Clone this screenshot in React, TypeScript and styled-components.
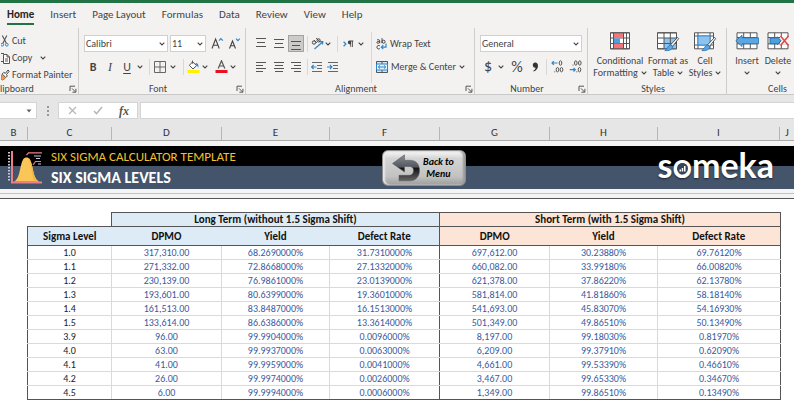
import React from "react";
import styled, { createGlobalStyle, css } from "styled-components";

const UI = `Carlito, "Open Sans", "Noto Sans", sans-serif`;
const SHEET = `Carlito, Lato, sans-serif`;
const COLS = "28fr 84fr 110fr 108fr 110fr 110fr 108fr 122fr 14fr";

const Global = createGlobalStyle`
  *, *::before, *::after { box-sizing: border-box; }
  body { margin: 0; background: #fff; font-family: ${UI}; color: #444; overflow-x: hidden; }
  button, input, select { font: inherit; color: inherit; margin: 0; }
`;

const bare = css`
  border: 0;
  padding: 0;
  background: none;
`;

const Page = styled.div`
  display: flex;
  flex-direction: column;
`;

const Top = styled.header`
  border-top: 3px solid #217346;
  background: #f3f2f1;
`;

const Tabs = styled.nav`
  display: flex;
  gap: 16px;
  padding-left: 7px;
  height: 25px;
`;

const Tab = styled.button<{ $active?: boolean }>`
  ${bare}
  height: 22px;
  padding-top: 2px;
  white-space: nowrap;
  font-size: 11px;
  font-weight: ${(p) => (p.$active ? 700 : 400)};
  color: ${(p) => (p.$active ? "#262626" : "#444")};
  border-bottom: 2px solid ${(p) => (p.$active ? "#217346" : "transparent")};
`;

const Ribbon = styled.div`
  display: grid;
  grid-template-columns: 79fr 167fr 229fr 113fr 139fr 67fr;
  height: 67px;
  border-bottom: 1px solid #c9c9c9;
`;

const Group = styled.section`
  display: flex;
  flex-direction: column;
  min-width: 0;
  margin-bottom: 3px;
  border-right: 1px solid #cfcdcb;
  &:last-child { border-right: 0; }
`;

const GroupBody = styled.div<{ $pad?: number }>`
  flex: 1;
  display: flex;
  flex-direction: column;
  padding: 4px 0 0 ${(p) => p.$pad ?? 0}px;
`;

const Caption = styled.div<{ $left?: boolean }>`
  position: relative;
  height: 12px;
  padding-right: 8px;
  line-height: 12px;
  font-size: 10px;
  text-align: ${(p) => (p.$left ? "left" : "center")};
`;

const CellsCaption = styled(Caption)`
  padding: 0 0 0 34px;
`;

const Launch = styled.button`
  ${bare}
  position: absolute;
  right: 1px;
  top: 2px;
  width: 8px;
  height: 8px;
  display: flex;
`;

const ClipItem = styled.button`
  ${bare}
  display: flex;
  align-items: center;
  gap: 2px;
  height: 17px;
  font-size: 10px;
  white-space: nowrap;
  svg { flex: none; }
`;

const Row = styled.div`
  display: flex;
  align-items: center;
  height: 23px;
`;

const Tool = styled.button<{ $w: number; $on?: boolean }>`
  ${bare}
  flex: none;
  display: flex;
  align-items: center;
  justify-content: center;
  width: ${(p) => p.$w}px;
  height: 17px;
  font-size: 12px;
  line-height: 16px;
  ${(p) => p.$on && "background: #cdcbca; border: 1px solid #a5a3a1;"}
`;

const Glyph = styled.span<{ $kind: "b" | "i" | "u" }>`
  font-size: 12px;
  font-weight: ${(p) => (p.$kind === "b" ? 700 : 400)};
  font-style: ${(p) => (p.$kind === "i" ? "italic" : "normal")};
  font-family: ${(p) => (p.$kind === "i" ? `"Liberation Serif", serif` : UI)};
  text-decoration: ${(p) => (p.$kind === "u" ? "underline" : "none")};
  text-underline-offset: 2px;
`;

const BigGlyph = styled.span`
  font-size: 16px;
`;

const Fx = styled.span`
  font-family: "Liberation Serif", serif;
  font-style: italic;
  font-weight: 700;
  font-size: 12px;
  color: #555;
`;

const Rule = styled.i<{ $w: number }>`
  flex: none;
  display: flex;
  justify-content: center;
  width: ${(p) => p.$w}px;
  height: 16px;
  &::before { content: ""; width: 1px; background: #dad8d6; }
`;

const Picker = styled.label<{ $w: number }>`
  display: flex;
  align-items: center;
  width: ${(p) => p.$w}px;
  height: 17px;
  margin-right: 2px;
  padding-right: 2px;
  background: #fff;
  border: 1px solid #d2d0ce;
  select {
    ${bare}
    appearance: none;
    flex: 1;
    min-width: 0;
    padding-left: 1px;
    font-size: 10px;
    outline: 0;
  }
`;

const AlignBody = styled.div`
  flex: 1;
  display: flex;
  padding: 4px 0 0 6px;
`;

const AlignLeft = styled.div`
  width: 120px;
  border-right: 1px solid #dad8d6;
`;

const AlignRight = styled.div`
  flex: 1;
  padding-left: 4px;
`;

const TextTool = styled.button`
  ${bare}
  display: flex;
  align-items: center;
  gap: 3px;
  height: 17px;
  font-size: 10px;
  white-space: nowrap;
`;

const Gap = styled.span`
  width: 4px;
`;

const BigRow = styled.div<{ $pad: number }>`
  flex: 1;
  display: flex;
  padding: 4px 0 0 ${(p) => p.$pad}px;
`;

const Big = styled.button<{ $w: number }>`
  ${bare}
  flex: none;
  width: ${(p) => p.$w}px;
  display: flex;
  flex-direction: column;
  align-items: center;
  font-size: 10px;
  line-height: 12px;
  white-space: nowrap;
`;

const BigArt = styled.span`
  display: flex;
  height: 23px;
`;

const BigLine = styled.span`
  display: flex;
  align-items: center;
  gap: 3px;
  height: 12px;
`;

const FormulaBar = styled.div`
  display: flex;
  padding-top: 7px;
  height: 24px;
  background: #e6e6e6;
`;

const NameBox = styled.label`
  display: flex;
  align-items: center;
  width: 37px;
  padding-right: 4px;
  background: #fff;
  border: 1px solid #d4d4d4;
  border-left: 0;
  input { ${bare} flex: 1; min-width: 0; outline: 0; font-size: 10px; }
`;

const Dots = styled.span`
  width: 21px;
  display: flex;
  align-items: center;
  justify-content: center;
`;

const FxBox = styled.div`
  display: flex;
  width: 80px;
  margin-right: 2px;
  align-items: center;
  background: #fff;
  border: 1px solid #d4d4d4;
`;

const Formula = styled.input`
  flex: 1;
  min-width: 0;
  padding: 0 4px;
  font-size: 10px;
  outline: 0;
  background: #fff;
  border: 1px solid #d4d4d4;
  border-right: 0;
`;

const ColHeads = styled.div`
  display: grid;
  grid-template-columns: ${COLS};
  height: 22px;
  padding-top: 8px;
  background: #e6e6e6;
  border-bottom: 1px solid #ababab;
`;

const ColHead = styled.span`
  min-width: 0;
  border-right: 1px solid #b6b6b6;
  text-align: center;
  font-size: 11px;
  line-height: 12px;
  color: #333;
  &:last-child { border-right: 0; }
`;

const Frozen = styled.div`
  padding: 5px 0 4px;
  background: #f4f4f4;
  border-bottom: 1px solid #c4c4c4;
`;

const Banner = styled.div`
  position: relative;
  display: flex;
  align-items: flex-start;
  height: 43px;
  background: linear-gradient(#000 0 20px, #44546a 20px);
`;

const BellWrap = styled.div`
  width: 51px;
  padding: 4px 0 0 7px;
  display: flex;
`;

const Titles = styled.div`
  flex: 1;
  font-family: ${SHEET};
  white-space: nowrap;
`;

const Kicker = styled.div`
  font-size: 13px;
  line-height: 22px;
  height: 20px;
  color: #f0c030;
`;

const Title = styled.h1`
  margin: 0;
  font-size: 16px;
  line-height: 24px;
  font-weight: 700;
  color: #fff;
`;

const Back = styled.button`
  position: absolute;
  left: 48.1%;
  top: 4px;
  display: flex;
  align-items: center;
  width: 84px;
  height: 36px;
  padding: 0 8px 0 9px;
  border: 1px solid #8d8d8d;
  border-radius: 6px;
  background: linear-gradient(#fafafa, #d4d4d4 22%, #c2c2c2 75%, #9c9c9c);
  box-shadow: inset 2px 0 2px #e8e8e8, inset -2px 0 2px #9a9a9a;
`;

const BackText = styled.span`
  flex: 1;
  font-family: ${SHEET};
  font-size: 10px;
  font-weight: 700;
  font-style: italic;
  line-height: 12px;
  color: #000;
  text-align: center;
`;

const Logo = styled.div`
  position: relative;
  margin-right: 20px;
  font-family: Lato, sans-serif;
  font-weight: 700;
  font-size: 34px;
  line-height: 38px;
  color: #fff;
  text-shadow: 0 1px 2px rgba(0, 0, 0, 0.6);
`;

const LogoMark = styled.svg`
  position: absolute;
  left: 20px;
  top: 17px;
`;

const FreezeLine = styled.div`
  height: 5px;
  background: #f4f4f4;
  border-bottom: 1px solid #555;
`;

const Sheet = styled.main`
  padding: 13px 13px 8px 27px;
`;

const Table = styled.table`
  width: 100%;
  table-layout: fixed;
  border-collapse: collapse;
  font-family: ${SHEET};
  font-size: 10px;
  line-height: 13px;
  text-align: center;
`;

const Blank = styled.td`
  border: 0;
`;

const Head = styled.th<{ $tone: "blue" | "peach"; $tall?: boolean; $end?: boolean; $start?: boolean }>`
  padding: 0;
  height: ${(p) => (p.$tall ? 19 : 14)}px;
  font-size: 11px;
  color: #111;
  font-weight: 700;
  background: ${(p) => (p.$tone === "blue" ? "#ddebf7" : "#fce4d6")};
  border-top: 1px solid #555;
  border-bottom: 1px solid #555;
  ${(p) => p.$start && "border-left: 1px solid #555;"}
  ${(p) => p.$end && "border-right: 1px solid #555;"}
`;

const Cell = styled.td`
  padding: 0;
  height: 14px;
  color: #3a5ba0;
  border: 1px solid #dadada;
  &:first-child { color: #222; border-left-color: #555; }
  &:nth-child(4), &:last-child { border-right-color: #555; }
  tr:first-child > & { border-top-color: #555; }
  tr:last-child > & { border-bottom-color: #555; }
`;

const Chev = () => (
  <svg width="6" height="4" viewBox="0 0 6 4" fill="none" stroke="#444" strokeWidth="1.1">
    <path d="M.7.6 3 2.9 5.3.6" />
  </svg>
);

const LaunchIcon = () => (
  <Launch aria-label="More options">
    <svg width="8" height="8" viewBox="0 0 8 8" fill="none" stroke="#555" strokeWidth="1">
      <path d="M1 6V1.2h5M3 3.4l3.4 3.4M6.9 3.8v3.4H3.4" />
    </svg>
  </Launch>
);

const Lines = ({ rows }: { rows: [number, number, number][] }) => (
  <svg width="12" height="12" viewBox="0 0 12 12" stroke="#555" strokeWidth="1">
    {rows.map(([y, a, b]) => (
      <path key={y} d={`M${a} ${y + 0.5}H${b}`} />
    ))}
  </svg>
);

const IndentIcon = ({ out }: { out?: boolean }) => (
  <svg width="12" height="12" viewBox="0 0 12 12" fill="none" stroke="#666">
    <path d="M1 1.5h10M6 4.5h5M6 7.5h5M1 10.5h10" />
    <path stroke="#2f86cc" strokeWidth="1.2" d={out ? "M5.5 6H.8M2.6 4 .7 6l1.9 2" : "M0 6h4.8M3 4l1.9 2L3 8"} />
  </svg>
);

const GrowIcon = ({ up }: { up?: boolean }) => (
  <svg width="13" height="13" viewBox="0 0 13 13" fill="none">
    <path stroke="#444" strokeWidth="1.1" d={up ? "M1 11.5 4.6 2l3.6 9.5M2.2 8.3H7" : "M1.5 11.5 4.5 4l3 7.5M2.6 8.8h3.8"} />
    <path stroke="#2f86cc" strokeWidth="1.2" d={up ? "M8 3.6 9.9 1.6l1.9 2" : "M8 1.6l1.9 2 1.9-2"} />
  </svg>
);

const BorderIcon = () => (
  <svg width="12" height="12" viewBox="0 0 12 12" fill="none" stroke="#666">
    <path d="M.5.5h11v11H.5zM6 .5v11M.5 6h11" />
  </svg>
);

const FillIcon = () => (
  <svg width="13" height="13" viewBox="0 0 13 13" fill="none">
    <path stroke="#555" fill="#fff" d="M5.5 1.8 9.6 5.6 6 9 2.4 5.4zM5.5 3.6V.6" />
    <path fill="#2f6db5" d="M9 3c2 0 2.8 2.2 2.3 4.8C10.5 6.5 10.3 5 8.5 3.8z" />
    <path fill="#fff200" d="M.5 10h12v3H.5z" />
  </svg>
);

const FontColorIcon = () => (
  <svg width="13" height="13" viewBox="0 0 13 13" fill="none">
    <path stroke="#555" strokeWidth="1.2" d="M3.2 8.5 6.5.8l3.3 7.7M4.4 6h4.2" />
    <path fill="#e81123" d="M.5 10h12v3H.5z" />
  </svg>
);

const OrientIcon = () => (
  <svg width="13" height="13" viewBox="0 0 13 13" fill="none">
    <g stroke="#444">
      <circle cx="3" cy="5.5" r="1.7" />
      <path d="M3.3 3.3l2.5 2.7M5.2 1l4 4" />
      <circle cx="7.6" cy="3.4" r="1.6" />
    </g>
    <path stroke="#2f86cc" strokeWidth="1.2" d="M3.5 12l8-7M8.8 4.6l3-.1-.3 3" />
  </svg>
);

const ParaIcon = () => (
  <svg width="11" height="10" viewBox="0 0 11 10" fill="none">
    <path stroke="#2f86cc" strokeWidth="1.2" d="M.6 2.8 2.9 5 .6 7.2" />
    <path fill="#444" d="M6.5 1.5h3.8v.9h-.5V8H9V2.4h-.8V8h-.8V5.5C4.2 5.5 4.2 1.5 6.5 1.5z" />
  </svg>
);

const WrapIcon = () => (
  <svg width="11" height="12" viewBox="0 0 11 12" fill="none" stroke="#444">
    <path d="M1 2c1-.6 2.7-.4 2.7.8v2.4M3.7 3.5C2.5 3.3.8 3.5.8 4.5s2.4 1 2.9-.3M6 .2v5" />
    <circle cx="7.6" cy="3.7" r="1.5" />
    <path d="M3.8 7.7C2.5 7 .9 7.7.9 9.2s1.6 2.2 2.9 1.5" />
    <path stroke="#2f86cc" strokeWidth="1.2" d="M10 5.5v3.7H5.5M7.3 7.2l-2 2 2 2" />
  </svg>
);

const MergeIcon = () => (
  <svg width="12" height="12" viewBox="0 0 12 12" fill="none">
    <path fill="#cfe5f7" stroke="#555" d="M.5.5h11v11H.5zM6 .5v2.5M6 9v2.5" />
    <path fill="#e4f1fb" stroke="#2f86cc" d="M.5 3h11v6H.5zM2.3 6h7.4M4 4.4 2.3 6 4 7.6M8 4.4 9.7 6 8 7.6" />
  </svg>
);

const ClipIcons = {
  cut: (
    <svg width="9" height="12" viewBox="0 0 9 12" fill="none">
      <path stroke="#555" strokeWidth="1.1" d="M1.3.5l4.2 8M5.8.5l-4 8" />
      <circle cx="1.2" cy="9.7" r="1.4" stroke="#2f86cc" />
      <circle cx="5.8" cy="9.7" r="1.4" stroke="#2f86cc" />
    </svg>
  ),
  copy: (
    <svg width="9" height="12" viewBox="0 0 9 12" fill="none" stroke="#555">
      <path d="M0 1.5h3M0 9.5h2" />
      <path fill="#fff" d="M2.5 2.5h3.5l2.5 2.5v6.5h-6zM6 2.5V5h2.5M4 7h3M4 9h3" />
    </svg>
  ),
  paint: (
    <svg width="9" height="12" viewBox="0 0 9 12" fill="none">
      <path fill="#f3a25c" stroke="#c96a1c" d="M0 5.5l4 4L1.5 11 0 10z" />
      <path fill="#fff" stroke="#444" d="M1.2 5l1.6-1.6 1.6 1L7 1l1.2 1.2L5.5 5.5l.8 1.5-1.5 1.5z" />
    </svg>
  ),
};

const DecimalIcon = ({ inc }: { inc?: boolean }) => (
  <svg width="13" height="13" viewBox="0 0 13 13" fill="none" stroke="#444" strokeWidth=".9">
    <ellipse cx={inc ? 9.5 : 6.8} cy="3" rx="1.3" ry="2.2" />
    {!inc && <ellipse cx="10.8" cy="3" rx="1.3" ry="2.2" />}
    <ellipse cx="10.5" cy="9.7" rx="1.3" ry="2.2" />
    {inc && <ellipse cx="6.5" cy="9.7" rx="1.3" ry="2.2" />}
    <path d={inc ? "M3.8 11.3v1" : "M4 4.6v1M7.8 11.3v1"} />
    <path stroke="#2f86cc" strokeWidth="1.2" d={inc ? "M6.5 3H1M2.8 1.2 1 3l1.8 1.8" : "M.8 9.7h5.5M4.5 7.9l1.8 1.8-1.8 1.8"} />
  </svg>
);

const CondIcon = () => (
  <svg width="22" height="18" viewBox="0 0 22 18" fill="none">
    <path fill="#fff" stroke="#555" d="M1.5.8h19v16h-19zM17.5.8v16M1.5 6h19M1.5 11.5h19" />
    <path fill="#f2777a" d="M4.5 1h10v5h-10zM4.5 11.5h10v5.3h-10z" />
    <path fill="#4f9fdf" d="M4.5 6.5H11V11H4.5z" />
    <path stroke="#555" d="M1.5.8h19v16h-19zM4.5.8v16M14.5.8v16" />
  </svg>
);

const Brush = () => (
  <g>
    <path fill="#fff" stroke="#444" strokeWidth=".9" d="M21.5 5.5l1.2 1-6 7.8-2-1.6z" />
    <path fill="#5aa7e3" stroke="#1f6fb3" strokeWidth=".8" d="M14.6 12.7l2.2 1.8c-.3 3-3.8 4.7-8 4 2.7-1.2 2.8-5 5.8-5.8z" />
  </g>
);

const TableIcon = () => (
  <svg width="24" height="20" viewBox="0 0 24 20" fill="none">
    <path fill="#fff" stroke="#555" d="M1.5.8h19v16h-19z" />
    <path fill="#8ec3ee" d="M8 6h12.5v11H8z" />
    <path stroke="#555" d="M1.5.8h19v16h-19zM8 .8v16M14.3.8v16M1.5 6h19M1.5 11.5h19" />
    <Brush />
  </svg>
);

const StyleIcon = () => (
  <svg width="24" height="20" viewBox="0 0 24 20" fill="none">
    <path fill="#fff" stroke="#555" d="M1.5.8h19v16h-19zM5 .8v16M17 .8v16M1.5 4h19M1.5 13h19" />
    <path fill="#8ec3ee" stroke="#3b8fd4" d="M5 4h12v9H5z" />
    <Brush />
  </svg>
);

const CellsIcon = ({ del }: { del?: boolean }) => (
  <svg width="24" height="18" viewBox="0 0 24 18" fill="none">
    <path fill="#fff" stroke="#555" d="M2 .8h20v16H2zM8.7.8v16M15.3.8v16M2 5.5h20M2 11.8h20" />
    {del ? (
      <>
        <path fill="#f3f2f1" d="M14 5h9v7.5h-9z" />
        <path fill="#4f9fdf" stroke="#1f6fb3" d="M4 5.8h7.5v-1l3.5 4-3.5 4v-1H4z" />
        <path stroke="#e04848" strokeWidth="1.5" d="M14.5 4l8 9.5M22.5 4l-8 9.5" />
      </>
    ) : (
      <path fill="#5aa7e3" stroke="#1f6fb3" strokeWidth=".8" d="M23.5 5.8v6H7v2.7L.8 8.8 7 3.2v2.6z" />
    )}
  </svg>
);

const BellIcon = () => (
  <svg width="36" height="35" viewBox="0 0 36 35" fill="none">
    <path stroke="#c9c6dc" strokeWidth="2" strokeDasharray="1.4 1.6" d="M2 2v30" />
    <path stroke="#ef7f86" strokeWidth="2" d="M5 1v31.5h30" />
    <path fill="#fbc658" d="M7 31.5c5-2 5.5-11 7.5-18 1.3-4.500 2.800-6 5-6s3.700 1.500 5 6c2 7 2.500 16 7.500 18z" />
    <path fill="#f0b648" d="M21.5 8c1.300.9 2.200 2.600 3 5.500 2 7 2.500 16 7.500 18h-4c-3.500-4-3-17-6.500-23.500z" />
    <path stroke="#ef7f86" strokeWidth="1.2" d="M19.5 5l2-2.2H35M26 15l2.5-3.500H34" />
    <path stroke="#c9c6dc" strokeWidth="1.2" d="M27 6h7M29 8.500h4M31 14h3" />
  </svg>
);

const ReturnIcon = () => (
  <svg width="28" height="28" viewBox="0 0 28 28">
    <defs>
      <linearGradient id="ret" x1="0" y1="0" x2="0" y2="1">
        <stop offset="0" stopColor="#8a8f98" />
        <stop offset=".48" stopColor="#50555d" />
        <stop offset=".5" stopColor="#111" />
        <stop offset="1" stopColor="#666" />
      </linearGradient>
    </defs>
    <path fill="url(#ret)" stroke="#555" strokeWidth=".5" d="M.5 9.5 12.5.8v5.5H18c6 0 9.5 4 9.5 10s-3.500 10.500-9.500 10.500H7v-5.500h10c3 0 4.500-2 4.500-4.800S20 12.500 17 12.500h-4.500V18z" />
  </svg>
);

const levels: string[][] = [
  ["1.0", "317,310.00", "68.2690000%", "31.7310000%", "697,612.00", "30.23880%", "69.76120%"],
  ["1.1", "271,332.00", "72.8668000%", "27.1332000%", "660,082.00", "33.99180%", "66.00820%"],
  ["1.2", "230,139.00", "76.9861000%", "23.0139000%", "621,378.00", "37.86220%", "62.13780%"],
  ["1.3", "193,601.00", "80.6399000%", "19.3601000%", "581,814.00", "41.81860%", "58.18140%"],
  ["1.4", "161,513.00", "83.8487000%", "16.1513000%", "541,693.00", "45.83070%", "54.16930%"],
  ["1.5", "133,614.00", "86.6386000%", "13.3614000%", "501,349.00", "49.86510%", "50.13490%"],
  ["3.9", "96.00", "99.9904000%", "0.0096000%", "8,197.00", "99.18030%", "0.81970%"],
  ["4.0", "63.00", "99.9937000%", "0.0063000%", "6,209.00", "99.37910%", "0.62090%"],
  ["4.1", "41.00", "99.9959000%", "0.0041000%", "4,661.00", "99.53390%", "0.46610%"],
  ["4.2", "26.00", "99.9974000%", "0.0026000%", "3,467.00", "99.65330%", "0.34670%"],
  ["4.5", "6.00", "99.9994000%", "0.0006000%", "1,349.00", "99.86510%", "0.13490%"],
];

const ColSize = styled.col<{ $share: number }>`
  width: ${(p) => (p.$share / 753) * 100}%;
`;

const shares = [84, 110, 108, 110, 110, 108, 123];

export default function App() {
  return (
    <Page>
      <Global />
      <Top>
        <Tabs>
          {["Home", "Insert", "Page Layout", "Formulas", "Data", "Review", "View", "Help"].map((t, i) => (
            <Tab key={t} $active={i === 0}>{t}</Tab>
          ))}
        </Tabs>
        <Ribbon>
          <Group>
            <GroupBody $pad={1}>
              <ClipItem>{ClipIcons.cut}Cut</ClipItem>
              <ClipItem>{ClipIcons.copy}Copy<Gap /><Chev /></ClipItem>
              <ClipItem>{ClipIcons.paint}Format Painter</ClipItem>
            </GroupBody>
            <Caption $left>lipboard<LaunchIcon /></Caption>
          </Group>

          <Group>
            <GroupBody $pad={5}>
              <Row>
                <Picker $w={84}>
                  <select aria-label="Font"><option>Calibri</option></select>
                  <Chev />
                </Picker>
                <Picker $w={36}>
                  <select aria-label="Font size"><option>11</option></select>
                  <Chev />
                </Picker>
                <Tool $w={18} aria-label="Increase font size"><GrowIcon up /></Tool>
                <Tool $w={16} aria-label="Decrease font size"><GrowIcon /></Tool>
              </Row>
              <Row>
                <Tool $w={18}><Glyph $kind="b">B</Glyph></Tool>
                <Tool $w={16}><Glyph $kind="i">I</Glyph></Tool>
                <Tool $w={18}><Glyph $kind="u">U</Glyph></Tool>
                <Tool $w={8} aria-label="Underline styles"><Chev /></Tool>
                <Rule $w={10} />
                <Tool $w={12} aria-label="Borders"><BorderIcon /></Tool>
                <Tool $w={14} aria-label="Border styles"><Chev /></Tool>
                <Rule $w={6} />
                <Tool $w={14} aria-label="Fill color"><FillIcon /></Tool>
                <Tool $w={10} aria-label="Fill palette"><Chev /></Tool>
                <Gap />
                <Tool $w={14} aria-label="Font color"><FontColorIcon /></Tool>
                <Tool $w={10} aria-label="Font palette"><Chev /></Tool>
              </Row>
            </GroupBody>
            <Caption>Font<LaunchIcon /></Caption>
          </Group>

          <Group>
            <AlignBody>
              <AlignLeft>
                <Row>
                  <Tool $w={18} aria-label="Top align"><Lines rows={[[0, 1, 11], [4, 2, 10], [8, 1, 11]]} /></Tool>
                  <Tool $w={18} aria-label="Middle align"><Lines rows={[[1, 1, 11], [5, 2, 10], [9, 1, 11]]} /></Tool>
                  <Tool $w={16} $on aria-label="Bottom align"><Lines rows={[[3, 1, 11], [7, 2, 10], [11, 1, 11]]} /></Tool>
                  <Rule $w={6} />
                  <Tool $w={14} aria-label="Orientation"><OrientIcon /></Tool>
                  <Tool $w={8} aria-label="Orientation options"><Chev /></Tool>
                  <Rule $w={10} />
                  <Tool $w={12} aria-label="Text direction"><ParaIcon /></Tool>
                  <Tool $w={14} aria-label="Direction options"><Chev /></Tool>
                </Row>
                <Row>
                  <Tool $w={18} aria-label="Align left"><Lines rows={[[1, 1, 11], [4, 1, 8], [7, 1, 11], [10, 1, 8]]} /></Tool>
                  <Tool $w={18} aria-label="Center"><Lines rows={[[1, 1, 11], [4, 2, 10], [7, 1, 11], [10, 2, 10]]} /></Tool>
                  <Tool $w={16} aria-label="Align right"><Lines rows={[[1, 1, 11], [4, 4, 11], [7, 1, 11], [10, 4, 11]]} /></Tool>
                  <Rule $w={6} />
                  <Tool $w={14} aria-label="Decrease indent"><IndentIcon out /></Tool>
                  <Tool $w={18} aria-label="Increase indent"><IndentIcon /></Tool>
                </Row>
              </AlignLeft>
              <AlignRight>
                <Row><TextTool><WrapIcon />Wrap Text</TextTool></Row>
                <Row><TextTool><MergeIcon />Merge &amp; Center <Chev /></TextTool></Row>
              </AlignRight>
            </AlignBody>
            <Caption>Alignment<LaunchIcon /></Caption>
          </Group>

          <Group>
            <GroupBody $pad={5}>
              <Row>
                <Picker $w={102}>
                  <select aria-label="Number format"><option>General</option></select>
                  <Chev />
                </Picker>
              </Row>
              <Row>
                <Tool $w={16} aria-label="Accounting format"><BigGlyph>$</BigGlyph></Tool>
                <Tool $w={10} aria-label="Currency options"><Chev /></Tool>
                <Tool $w={22} aria-label="Percent style"><BigGlyph>%</BigGlyph></Tool>
                <Tool $w={14} aria-label="Comma style">
                  <svg width="7" height="10" viewBox="0 0 7 10"><path fill="#333" d="M3.2.5C5 .5 6 1.8 6 3.7 6 6.5 4.3 8.6 1.5 9.5l-.3-.8c1.4-.6 2.3-1.6 2.4-2.9C2 6 .8 4.9.8 3.1.8 1.5 1.8.5 3.2.5z" /></svg>
                </Tool>
                <Rule $w={8} />
                <Tool $w={14} aria-label="Increase decimal"><DecimalIcon inc /></Tool>
                <Gap />
                <Tool $w={14} aria-label="Decrease decimal"><DecimalIcon /></Tool>
              </Row>
            </GroupBody>
            <Caption>Number<LaunchIcon /></Caption>
          </Group>

          <Group>
            <BigRow $pad={5}>
              <Big $w={54}><BigArt><CondIcon /></BigArt><BigLine>Conditional</BigLine><BigLine>Formatting <Chev /></BigLine></Big>
              <Big $w={42}><BigArt><TableIcon /></BigArt><BigLine>Format as</BigLine><BigLine>Table <Chev /></BigLine></Big>
              <Big $w={32}><BigArt><StyleIcon /></BigArt><BigLine>Cell</BigLine><BigLine>Styles <Chev /></BigLine></Big>
            </BigRow>
            <Caption>Styles</Caption>
          </Group>

          <Group>
            <BigRow $pad={4}>
              <Big $w={32}><BigArt><CellsIcon /></BigArt><BigLine>Insert</BigLine><BigLine><Chev /></BigLine></Big>
              <Big $w={30}><BigArt><CellsIcon del /></BigArt><BigLine>Delete</BigLine><BigLine><Chev /></BigLine></Big>
            </BigRow>
            <CellsCaption>Cells</CellsCaption>
          </Group>
        </Ribbon>
      </Top>

      <FormulaBar>
        <NameBox>
          <input aria-label="Name box" />
          <svg width="6" height="4" viewBox="0 0 6 4"><path fill="#666" d="M.5.5h5L3 3.5z" /></svg>
        </NameBox>
        <Dots>
          <svg width="2" height="10" viewBox="0 0 2 10" fill="#999"><path d="M0 0h2v2H0zM0 4h2v2H0zM0 8h2v2H0z" /></svg>
        </Dots>
        <FxBox>
          <Tool $w={26} aria-label="Cancel">
            <svg width="9" height="9" viewBox="0 0 9 9" stroke="#b5b5b5" strokeWidth="1.2"><path d="M1 1l7 7M8 1 1 8" /></svg>
          </Tool>
          <Tool $w={26} aria-label="Enter">
            <svg width="10" height="9" viewBox="0 0 10 9" fill="none" stroke="#b5b5b5" strokeWidth="1.5"><path d="M1 5l2.5 2.7L9 1" /></svg>
          </Tool>
          <Tool $w={26} aria-label="Insert function"><Fx>fx</Fx></Tool>
        </FxBox>
        <Formula aria-label="Formula" />
      </FormulaBar>

      <ColHeads>
        {"BCDEFGHIJ".split("").map((c) => <ColHead key={c}>{c}</ColHead>)}
      </ColHeads>

      <Frozen>
        <Banner>
          <BellWrap><BellIcon /></BellWrap>
          <Titles>
            <Kicker>SIX SIGMA CALCULATOR TEMPLATE</Kicker>
            <Title>SIX SIGMA LEVELS</Title>
          </Titles>
          <Back><ReturnIcon /><BackText>Back to Menu</BackText></Back>
          <Logo>
            someka
            <LogoMark width="11" height="11" viewBox="0 0 11 11">
              <circle cx="5.5" cy="5.5" r="5.5" fill="#35445a" />
              <path fill="#fff" d="M2.5 6.5H4v2H2.5zM4.7 5h1.5v3.5H4.7zM7 3h1.5v5.500H7z" />
            </LogoMark>
          </Logo>
        </Banner>
      </Frozen>
      <FreezeLine />

      <Sheet>
        <Table>
          <colgroup>{shares.map((s, i) => <ColSize key={i} $share={s} />)}</colgroup>
          <thead>
            <tr>
              <Blank />
              <Head $tone="blue" $start $end colSpan={3}>Long Term (without 1.5 Sigma Shift)</Head>
              <Head $tone="peach" $end colSpan={3}>Short Term (with 1.5 Sigma Shift)</Head>
            </tr>
            <tr>
              <Head $tone="blue" $tall $start>Sigma Level</Head>
              <Head $tone="blue" $tall>DPMO</Head>
              <Head $tone="blue" $tall>Yield</Head>
              <Head $tone="blue" $tall $end>Defect Rate</Head>
              <Head $tone="peach" $tall>DPMO</Head>
              <Head $tone="peach" $tall>Yield</Head>
              <Head $tone="peach" $tall $end>Defect Rate</Head>
            </tr>
          </thead>
          <tbody>
            {levels.map((r) => (
              <tr key={r[0]}>{r.map((v, i) => <Cell key={i}>{v}</Cell>)}</tr>
            ))}
          </tbody>
        </Table>
      </Sheet>
    </Page>
  );
}
